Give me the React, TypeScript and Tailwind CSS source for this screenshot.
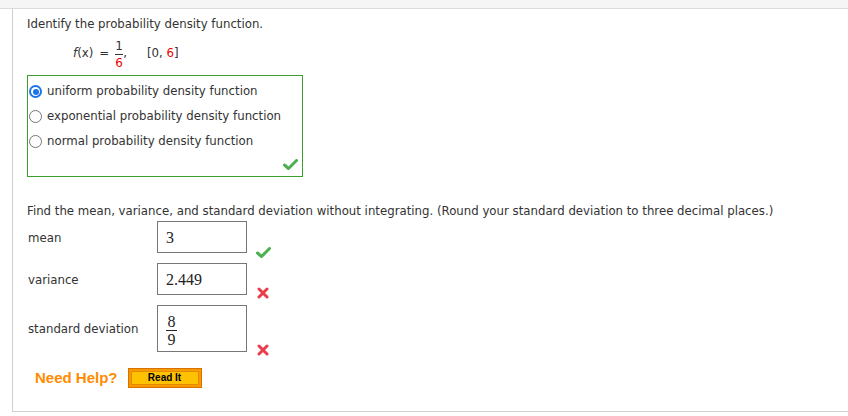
import React from 'react';

const Check: React.FC<{ className?: string }> = ({ className }) => (
  <svg className={className} width="15" height="11" viewBox="0 0 15 11">
    <path d="M1.5 6 L5.5 9.5 L13.5 1.5" fill="none" stroke="#4cb050" strokeWidth="3" strokeLinecap="round" strokeLinejoin="round" />
  </svg>
);

const Cross: React.FC<{ className?: string }> = ({ className }) => (
  <svg className={className} width="12" height="12" viewBox="0 0 12 12">
    <path d="M2 2 L10 10 M10 2 L2 10" fill="none" stroke="#ec3b4a" strokeWidth="3" strokeLinecap="round" />
  </svg>
);

const Radio: React.FC<{ checked?: boolean }> = ({ checked }) =>
  checked ? (
    <span className="w-[13px] h-[13px] rounded-full bg-[#1a73e8] flex items-center justify-center shrink-0">
      <span className="w-[9px] h-[9px] rounded-full bg-white flex items-center justify-center">
        <span className="w-[6px] h-[6px] rounded-full bg-[#1a73e8]" />
      </span>
    </span>
  ) : (
    <span className="w-[13px] h-[13px] rounded-full border border-[#767676] bg-white shrink-0" />
  );

const options = [
  { label: 'uniform probability density function', checked: true },
  { label: 'exponential probability density function' },
  { label: 'normal probability density function' },
];

const AnswerBox: React.FC<{ children: React.ReactNode; tall?: boolean }> = ({ children, tall }) => (
  <div
    className={`w-[90px] ${tall ? 'h-[47px]' : 'h-[32px]'} border border-[#777] bg-white px-[8px] pt-[4px] text-[16px] text-[#222]`}
    style={{ fontFamily: '"Liberation Serif", "DejaVu Serif", serif' }}
  >
    {children}
  </div>
);

export default function App() {
  const verdana = { fontFamily: '"DejaVu Sans", Verdana, sans-serif' };
  return (
    <div className="w-[848px] h-[416px] bg-white text-[#333] text-[11.75px] overflow-hidden" style={verdana}>
      <div className="h-[9px] bg-[#f5f5f5] border-b border-[#dcdcdc]" />
      <div className="ml-[12px] h-[403px] border-l border-b border-[#cfcfcf] pl-[14px] pt-[8px]">
        <p className="leading-[14px]">Identify the probability density function.</p>

        <div className="flex items-center h-[38px] mt-[4px] ml-[46px]">
          <span className="italic">f</span>
          <span>(x)</span>
          <span className="mx-[6px]">=</span>
          <span className="inline-flex flex-col items-center text-[12px] leading-[12px]">
            <span>1</span>
            <span className="block w-[8px] border-t border-[#333] my-[2px]" />
            <span className="text-[#e00]">6</span>
          </span>
          <span>,</span>
          <span className="ml-[20px]">
            [0, <span className="text-[#e00]">6</span>]
          </span>
        </div>

        <div className="mt-[2px] w-[276px] h-[102px] border border-[#3d9f2d] relative pl-[1px] pt-[3px]">
          {options.map((o) => (
            <div key={o.label} className="flex items-center gap-[5px] h-[25px]">
              <Radio checked={o.checked} />
              <span>{o.label}</span>
            </div>
          ))}
          <Check className="absolute right-[4px] bottom-[6px]" />
        </div>

        <p className="mt-[27px] leading-[14px]">
          Find the mean, variance, and standard deviation without integrating. (Round your standard deviation to three decimal places.)
        </p>

        <div className="mt-[3px] grid grid-cols-[130px_90px_auto] gap-y-[10px] items-center">
          <span className="pl-[1px] pt-[4px]">mean</span>
          <AnswerBox>3</AnswerBox>
          <Check className="self-end ml-[9px] -mb-[5px]" />

          <span className="pl-[1px] pt-[4px]">variance</span>
          <AnswerBox>2.449</AnswerBox>
          <Cross className="self-end ml-[10px] -mb-[4px]" />

          <span className="pl-[1px] pt-[2px]">standard deviation</span>
          <AnswerBox tall>
            <span className="inline-flex flex-col items-center text-[16px] leading-[15px] -mt-[4px]">
              <span>8</span>
              <span className="block w-[11px] border-t border-[#222] my-[1px]" />
              <span>9</span>
            </span>
          </AnswerBox>
          <Cross className="self-end ml-[10px] -mb-[4px]" />
        </div>

        <div className="flex items-center mt-[15px] ml-[8px]" style={{ fontFamily: '"Liberation Sans", Arial, sans-serif' }}>
          <span className="text-[15px] font-bold text-[#ff8c00]">Need Help?</span>
          <button className="ml-[10px] w-[74px] h-[20px] border border-[#d97000] bg-[#f59a00] p-[2px]">
            <span className="flex items-center justify-center w-full h-full bg-[#ffc200] border border-[#e88a00] text-[10px] font-bold text-black leading-none">
              Read It
            </span>
          </button>
        </div>
      </div>
    </div>
  );
}
